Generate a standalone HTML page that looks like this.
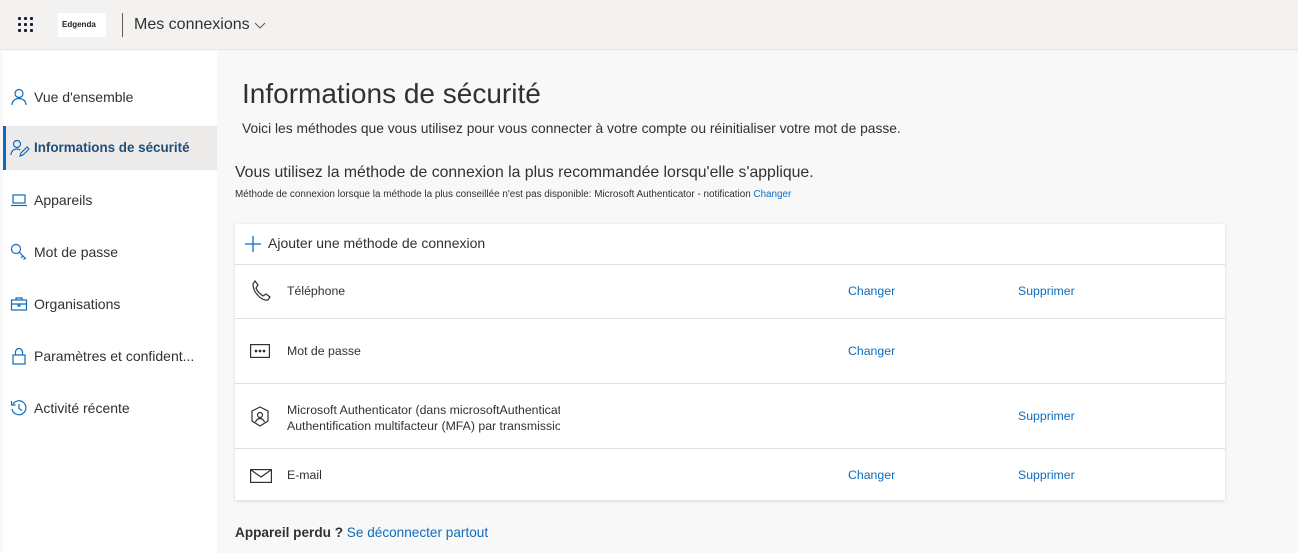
<!DOCTYPE html>
<html><head><meta charset="utf-8"><style>
*{box-sizing:border-box;margin:0;padding:0}
body{width:1298px;height:553px;overflow:hidden;background:#f8f8f8;font-family:"Segoe UI","Liberation Sans",sans-serif;color:#323130;position:relative}
.top{position:absolute;left:0;top:0;width:1298px;height:50px;background:#f3f2f1;border-bottom:1px solid #e6e6e6}
.waffle{position:absolute;left:18px;top:17px;width:16px;height:16px}
.waffle i{position:absolute;width:3px;height:3px;background:#1b1a3a;border-radius:1px}
.logo{position:absolute;left:58px;top:13px;width:48px;height:24px;background:#fff;font-size:8px;font-weight:bold;color:#222;line-height:24px;padding-left:4px}
.sep{position:absolute;left:122px;top:13px;width:1px;height:24px;background:#605e5c}
.app{position:absolute;left:134px;top:16px;font-size:16px;color:#323130}
.side{position:absolute;left:3px;top:51px;width:214px;height:502px;background:#fff}
.nav{position:absolute;left:0;width:214px;height:44px;font-size:14px;color:#323130;line-height:44px;padding-left:31px}
.nav svg{position:absolute;left:7px;top:13px}
.nav.sel{background:#edebe9;font-weight:bold;color:#1f4e79;border-left:3px solid #0f6cbd;padding-left:28px;font-size:13.4px}
.nav.sel svg{left:4px}
h1{position:absolute;left:242px;top:78px;font-size:28px;font-weight:normal;color:#323130}
.p1{position:absolute;left:242px;top:121px;font-size:13.8px}
.p2{position:absolute;left:235px;top:164px;font-size:15.8px}
.p3{position:absolute;left:235px;top:189px;font-size:9.9px}
a{color:#0f6cbd;text-decoration:none}
.card{position:absolute;left:235px;top:224px;width:990px;height:276px;background:#fff;box-shadow:0 1px 3px rgba(0,0,0,.15)}
.row{position:absolute;left:0;width:990px;border-top:1px solid #e1dfdd;font-size:12.3px}
.row .t{position:absolute;left:52px}
.row .c{position:absolute;left:613px;color:#0f6cbd}
.row .s{position:absolute;left:783px;color:#0f6cbd}
.row svg{position:absolute;left:15px}
.lost{position:absolute;left:235px;top:525px;font-size:13.6px}
</style></head><body>
<div class="top">
<div class="waffle">
<i style="left:0;top:0"></i><i style="left:6px;top:0"></i><i style="left:12px;top:0"></i>
<i style="left:0;top:6px"></i><i style="left:6px;top:6px"></i><i style="left:12px;top:6px"></i>
<i style="left:0;top:12px"></i><i style="left:6px;top:12px"></i><i style="left:12px;top:12px"></i>
</div>
<div class="logo">Edgenda</div>
<div class="sep"></div>
<div class="app">Mes connexions <svg width="12" height="8" viewBox="0 0 12 8" fill="none" stroke="#605e5c" stroke-width="1.1"><path d="M1 2l5 5 5-5"/></svg></div>
</div>
<div class="side">
<div class="nav" style="top:24px"><svg width="18" height="18" viewBox="0 0 18 18" fill="none" stroke="#0f6cbd" stroke-width="1.2"><circle cx="9" cy="5.5" r="4"/><path d="M2 17c0-4 3-6.5 7-6.5s7 2.5 7 6.5"/></svg>Vue d'ensemble</div>
<div class="nav sel" style="top:75px"><svg width="20" height="18" viewBox="0 0 20 18" fill="none" stroke="#0f6cbd" stroke-width="1.2"><circle cx="7" cy="5" r="3.5"/><path d="M1 16c0-3.5 2.5-6 6-6 1.5 0 2.5.4 3.3 1M10 17l1-3 6-6 2 2-6 6z"/></svg>Informations de sécurité</div>
<div class="nav" style="top:127px"><svg width="18" height="18" viewBox="0 0 18 18" fill="none" stroke="#0f6cbd" stroke-width="1.2"><rect x="3" y="4" width="12" height="8"/><path d="M1 14.5h16"/></svg>Appareils</div>
<div class="nav" style="top:179px"><svg width="18" height="18" viewBox="0 0 18 18" fill="none" stroke="#0f6cbd" stroke-width="1.2"><circle cx="6" cy="6" r="4.5"/><path d="M9 9l7 7M13 13l-2 2M15 15l-1.5 1.5"/></svg>Mot de passe</div>
<div class="nav" style="top:231px"><svg width="18" height="18" viewBox="0 0 18 18" fill="none" stroke="#0f6cbd" stroke-width="1.2"><rect x="1.5" y="5" width="15" height="10"/><path d="M6 5V3h6v2M1.5 9h15M8 9v2h2V9"/></svg>Organisations</div>
<div class="nav" style="top:283px"><svg width="18" height="18" viewBox="0 0 18 18" fill="none" stroke="#0f6cbd" stroke-width="1.2"><rect x="3" y="8" width="12" height="9"/><path d="M5.5 8V5a3.5 3.5 0 017 0v3"/></svg>Paramètres et confident...</div>
<div class="nav" style="top:335px"><svg width="18" height="18" viewBox="0 0 18 18" fill="none" stroke="#0f6cbd" stroke-width="1.2"><path d="M3 5a7 7 0 11-1 5M1.5 2v4h4M9 5v4.5l3 2"/></svg>Activité récente</div>
</div>
<h1>Informations de sécurité</h1>
<div class="p1">Voici les méthodes que vous utilisez pour vous connecter à votre compte ou réinitialiser votre mot de passe.</div>
<div class="p2">Vous utilisez la méthode de connexion la plus recommandée lorsqu'elle s'applique.</div>
<div class="p3">Méthode de connexion lorsque la méthode la plus conseillée n'est pas disponible: Microsoft Authenticator - notification <a>Changer</a></div>
<div class="card">
<div class="row" style="top:0;height:40px;border-top:none;font-size:14px"><svg style="left:9px;top:11px" width="18" height="18" viewBox="0 0 18 18" stroke="#0f6cbd" stroke-width="1.3"><path d="M9 1v16M1 9h16"/></svg><span style="position:absolute;left:33px;top:11px">Ajouter une méthode de connexion</span></div>
<div class="row" style="top:40px;height:54px"><svg style="top:14px" width="22" height="24" viewBox="0 0 22 24" fill="none" stroke="#323130" stroke-width="1.2"><path d="M5 2l3 4-2 3c1 3 4 6 7 8l3-2 4 3-2 3c-7 1-15-8-15-16z"/></svg><span class="t" style="top:19px">Téléphone</span><span class="c" style="top:19px">Changer</span><span class="s" style="top:19px">Supprimer</span></div>
<div class="row" style="top:94px;height:65px"><svg style="top:25px" width="20" height="14" viewBox="0 0 20 14" fill="none" stroke="#323130" stroke-width="1.2"><rect x=".6" y=".6" width="18.8" height="12.8"/><circle cx="6" cy="7" r=".8" fill="#323130"/><circle cx="10" cy="7" r=".8" fill="#323130"/><circle cx="14" cy="7" r=".8" fill="#323130"/></svg><span class="t" style="top:25px">Mot de passe</span><span class="c" style="top:25px">Changer</span></div>
<div class="row" style="top:159px;height:65px"><svg style="top:22px" width="20" height="22" viewBox="0 0 20 22" fill="none" stroke="#323130" stroke-width="1.2"><path d="M10 1l8 4v10l-8 5-8-5V5z"/><circle cx="10" cy="9" r="2.5"/><path d="M5.5 16c1-2.5 2.5-3.5 4.5-3.5s3.5 1 4.5 3.5"/></svg><span class="t" style="top:18px;width:273px;overflow:hidden;white-space:nowrap;line-height:16px">Microsoft Authenticator (dans microsoftAuthenticator)<br>Authentification multifacteur (MFA) par transmission</span><span class="s" style="top:25px">Supprimer</span></div>
<div class="row" style="top:224px;height:52px"><svg style="top:20px" width="22" height="14" viewBox="0 0 22 14" fill="none" stroke="#323130" stroke-width="1.2"><rect x=".6" y=".6" width="20.8" height="12.8"/><path d="M1 1l10 7 10-7"/></svg><span class="t" style="top:19px">E-mail</span><span class="c" style="top:19px">Changer</span><span class="s" style="top:19px">Supprimer</span></div>
</div>
<div class="lost"><b>Appareil perdu ?</b> <a>Se déconnecter partout</a></div>
</body></html>
